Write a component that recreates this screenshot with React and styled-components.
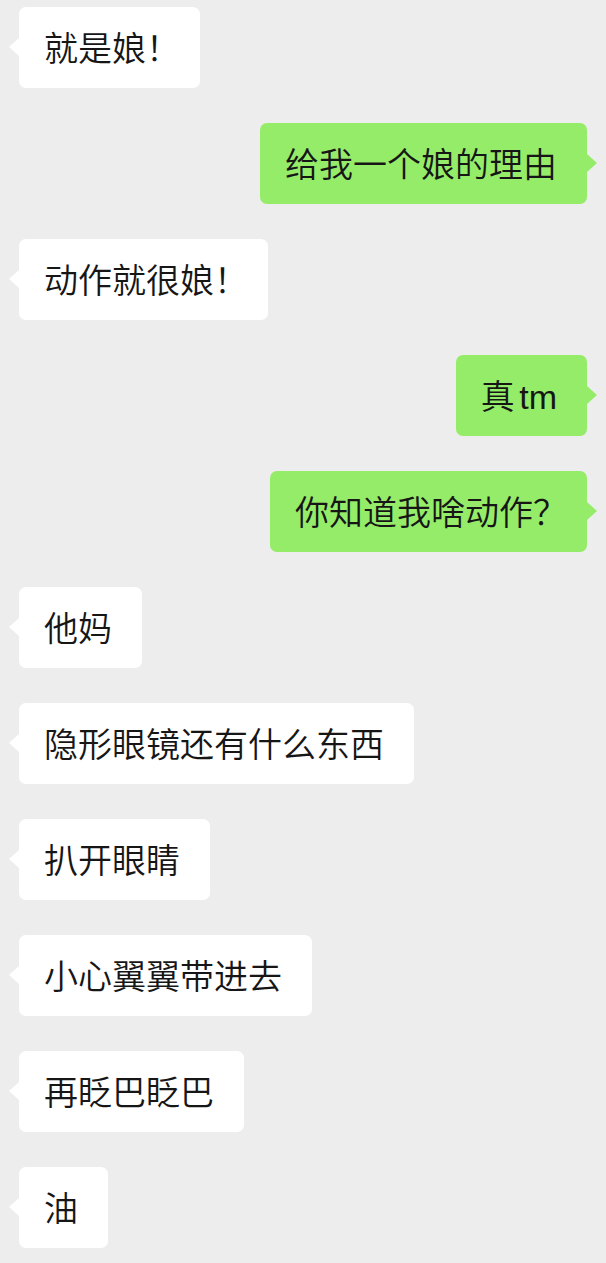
import styled, { createGlobalStyle } from 'styled-components';

const messages = [
  { id: 1, text: '就是娘', end: '！', mine: false },
  { id: 2, text: '给我一个娘的理由', mine: true },
  { id: 3, text: '动作就很娘', end: '！', mine: false },
  { id: 4, text: '真 tm', mine: true },
  { id: 5, text: '你知道我啥动作', end: '？', mine: true },
  { id: 6, text: '他妈', mine: false },
  { id: 7, text: '隐形眼镜还有什么东西', mine: false },
  { id: 8, text: '扒开眼睛', mine: false },
  { id: 9, text: '小心翼翼带进去', mine: false },
  { id: 10, text: '再眨巴眨巴', mine: false },
  { id: 11, text: '油', mine: false },
];

const App = () => {
  return (
    <>
      <GlobalStyle />
      <Chat>
        {messages.map((m) => (
          <Row key={m.id} $mine={m.mine}>
            <Bubble $mine={m.mine}>
              {m.text}
              {m.end && <Punct>{m.end}</Punct>}
            </Bubble>
          </Row>
        ))}
      </Chat>
    </>
  );
};

export default App;

const GlobalStyle = createGlobalStyle`
  html, body {
    margin: 0;
    padding: 0;
    background: #ededed;
  }
  body {
    font-family: "Liberation Sans", "Noto Sans CJK SC", sans-serif;
  }
`;

const Chat = styled('div')`
  display: flex;
  flex-direction: column;
  gap: 35px;
  padding: 7px 19px 0;
  width: 606px;
  height: 1263px;
  box-sizing: border-box;
  overflow: hidden;
`;

const Row = styled('div')`
  display: flex;
  justify-content: ${({ $mine }) => ($mine ? 'flex-end' : 'flex-start')};
`;

const Bubble = styled('div')`
  position: relative;
  box-sizing: border-box;
  height: 81px;
  padding: 19px 30px 15px 25px;
  font-size: 34px;
  font-weight: 350;
  line-height: 47px;
  color: #161616;
  white-space: nowrap;
  word-spacing: -5px;
  border-radius: 7px;
  background: ${({ $mine }) => ($mine ? '#95ec69' : '#ffffff')};

  &::before {
    content: '';
    position: absolute;
    top: 31px;
    width: 0;
    height: 0;
    border-top: 9px solid transparent;
    border-bottom: 9px solid transparent;
    ${({ $mine }) =>
      $mine
        ? 'right: -10px; border-left: 10px solid #95ec69;'
        : 'left: -10px; border-right: 10px solid #ffffff;'}
  }
`;

const Punct = styled('span')`
  letter-spacing: -10px;
`;
